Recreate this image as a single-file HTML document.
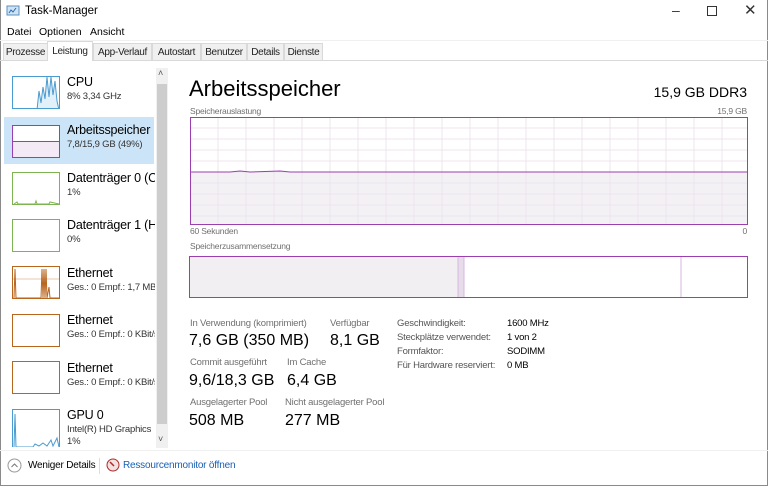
<!DOCTYPE html>
<html><head><meta charset="utf-8"><style>
*{margin:0;padding:0;box-sizing:border-box}
body{width:768px;height:486px;background:#fff;font-family:"Liberation Sans",sans-serif;color:#000;position:relative;overflow:hidden;font-size:12px}
.a{position:absolute;white-space:nowrap}
.win{position:absolute;left:0;top:0;width:768px;height:486px;border:1px solid #8a8a8a;border-top:none}
.tab{position:absolute;top:43px;height:17px;font-size:10px;letter-spacing:-0.3px;padding:3px 0 0;text-align:center;white-space:nowrap;overflow:hidden;background:#f0f0f0;border:1px solid #d9d9d9;border-bottom:none;color:#222}
.th{position:absolute;left:12px;width:48px;height:33px;background:#fff}
.nm{position:absolute;left:67px;font-size:12.5px;width:88px;overflow:hidden;white-space:nowrap;letter-spacing:-0.2px}
.sb{position:absolute;left:67px;font-size:9.5px;color:#333;width:88px;overflow:hidden;white-space:nowrap;letter-spacing:-0.2px}
.lbl{font-size:9.5px;color:#707070;letter-spacing:-0.2px}
.big{font-size:16px;color:#000}
.sm{font-size:9.5px;color:#555;letter-spacing:-0.2px}
.v{font-size:9.5px;letter-spacing:-0.2px}
</style></head><body>
<div class="win"></div>
<svg class="a" style="left:6px;top:5px" width="14" height="12"><rect x="1" y="1" width="12" height="9" fill="#cfe3f3" stroke="#5a8fc0"/><path d="M3 8 L5 5 L7 7 L10 3" stroke="#2a6cb0" fill="none"/></svg>
<div class="a" style="left:25px;top:5px;font-size:11.5px">Task-Manager</div>
<div class="a" style="left:672px;top:2px;font-size:14px;color:#333">–</div>
<div class="a" style="left:707px;top:6px;width:10px;height:10px;border:1px solid #333"></div>
<div class="a" style="left:744px;top:1px;font-size:15px;color:#333">✕</div>
<div class="a" style="left:7px;top:26px;font-size:10.5px">Datei</div>
<div class="a" style="left:39px;top:26px;font-size:10.5px">Optionen</div>
<div class="a" style="left:90px;top:26px;font-size:10.5px">Ansicht</div>
<div class="a" style="left:0;top:40px;width:768px;height:1px;background:#f0f0f0"></div>
<div class="a" style="left:0;top:60px;width:768px;height:1px;background:#d9d9d9"></div>
<div class="tab" style="left:3px;width:45px">Prozesse</div>
<div class="tab" style="left:47px;top:41px;height:20px;width:46px;background:#fff;padding-top:4px">Leistung</div>
<div class="tab" style="left:93px;width:59px">App-Verlauf</div>
<div class="tab" style="left:152px;width:49px">Autostart</div>
<div class="tab" style="left:201px;width:46px">Benutzer</div>
<div class="tab" style="left:247px;width:37px">Details</div>
<div class="tab" style="left:284px;width:39px">Dienste</div>
<div class="a" style="left:4px;top:117px;width:150px;height:47px;background:#cce4f7"></div>
<div class="a" style="left:156px;top:68px;width:12px;height:380px;background:#f0f0f0"></div>
<div class="a" style="left:157px;top:84px;width:10px;height:340px;background:#cdcdcd"></div>
<div class="a" style="left:158px;top:68px;font-size:9px;color:#555">˄</div>
<div class="a" style="left:158px;top:434px;font-size:9px;color:#555">˅</div>

<svg class="th" style="top:76px;border:1px solid #4a9bd0"><path d="M0 33 L24 33 L26 14 L28 26 L30 10 L32 22 L34 0 L36 20 L38 0 L40 18 L42 4 L44 24 L46 33" stroke="#4a9bd0" fill="#e2f0fa"/></svg>
<div class="nm" style="top:75px">CPU</div><div class="sb" style="top:91px">8% 3,34 GHz</div>

<div class="th" style="top:125px;border:1px solid #9b3fb0;background:linear-gradient(#fff 50%,#f4eaf6 50%)"><div style="position:absolute;top:15px;left:0;width:46px;height:1px;background:#9b3fb0"></div></div>
<div class="nm" style="top:123px">Arbeitsspeicher</div><div class="sb" style="top:139px">7,8/15,9 GB (49%)</div>

<svg class="th" style="top:172px;border:1px solid #7db451"><path d="M1 31 L4 29 L5 31 L22 31 L23 28 L24 31 L36 31 L37 29 L46 31" stroke="#7db451" fill="none"/></svg>
<div class="nm" style="top:171px">Datenträger 0 (C:)</div><div class="sb" style="top:187px">1%</div>

<div class="th" style="top:219px;border:1px solid #7db451"></div>
<div class="nm" style="top:218px">Datenträger 1 (H:)</div><div class="sb" style="top:234px">0%</div>

<svg class="th" style="top:266px;border:1px solid #b8651e"><path d="M0 12 L48 12" stroke="#e8c9ae"/><path d="M1 31 L2 2 L3 31 L28 31 L29 2 L30 31 L31 2 L32 31 L33 2 L34 31 L36 20 L37 31 L46 31" stroke="#b8651e" fill="none"/></svg>
<div class="nm" style="top:266px">Ethernet</div><div class="sb" style="top:282px">Ges.: 0 Empf.: 1,7 MBit/s</div>

<div class="th" style="top:314px;border:1px solid #b8651e"></div>
<div class="nm" style="top:313px">Ethernet</div><div class="sb" style="top:329px">Ges.: 0 Empf.: 0 KBit/s</div>

<div class="th" style="top:361px;border:1px solid #b8651e"></div>
<div class="nm" style="top:361px">Ethernet</div><div class="sb" style="top:377px">Ges.: 0 Empf.: 0 KBit/s</div>

<svg class="th" style="top:409px;height:38px;border:1px solid #4a9bd0;border-bottom:none"><path d="M1 37 L2 4 L3 37 L20 37 L22 34 L26 36 L30 33 L34 36 L38 30 L40 36 L44 28 L46 37" stroke="#4a9bd0" fill="none"/></svg>
<div class="nm" style="top:408px">GPU 0</div><div class="sb" style="top:424px">Intel(R) HD Graphics</div><div class="sb" style="top:436px">1%</div>

<div class="a" style="left:189px;top:76px;font-size:22px">Arbeitsspeicher</div>
<div class="a" style="right:21px;top:84px;font-size:14px">15,9 GB DDR3</div>
<div class="a lbl" style="left:190px;top:106px;font-size:8.5px">Speicherauslastung</div>
<div class="a lbl" style="right:21px;top:106px;font-size:8.5px">15,9 GB</div>
<svg class="a" style="left:190px;top:117px" width="558" height="108">
<rect x="0" y="55" width="558" height="53" fill="#f4f1f5"/>
<g stroke="#ece4ee">
<path d="M28 0V108M56 0V108M84 0V108M112 0V108M140 0V108M168 0V108M196 0V108M224 0V108M252 0V108M280 0V108M308 0V108M336 0V108M364 0V108M392 0V108M420 0V108M448 0V108M476 0V108M504 0V108M532 0V108"/>
<path d="M0 11H558M0 22H558M0 33H558M0 44H558M0 55H558M0 66H558M0 77H558M0 88H558M0 99H558"/>
</g>
<path d="M0 55 L40 55 L50 54 L60 55 L90 54 L100 55 L558 55" stroke="#9b3fb0" fill="none"/>
<rect x="0.5" y="0.5" width="557" height="107" fill="none" stroke="#9b3fb0"/>
</svg>
<div class="a lbl" style="left:190px;top:226px;font-size:8.5px">60 Sekunden</div>
<div class="a lbl" style="right:21px;top:226px;font-size:8.5px">0</div>
<div class="a lbl" style="left:190px;top:241px;font-size:8.5px">Speicherzusammensetzung</div>
<svg class="a" style="left:189px;top:256px" width="559" height="42">
<rect x="1" y="1" width="268" height="40" fill="#f1eff2"/>
<rect x="269" y="1" width="6" height="40" fill="#e6dcea"/>
<path d="M269 1V41M275 1V41M492 1V41" stroke="#d6b8de"/>
<rect x="0.5" y="0.5" width="558" height="41" fill="none" stroke="#9b3fb0"/>
</svg>

<div class="a lbl" style="left:190px;top:318px">In Verwendung (komprimiert)</div>
<div class="a lbl" style="left:330px;top:318px">Verfügbar</div>
<div class="a big" style="left:189px;top:332px">7,6 GB (350 MB)</div>
<div class="a big" style="left:330px;top:332px">8,1 GB</div>
<div class="a lbl" style="left:190px;top:357px">Commit ausgeführt</div>
<div class="a lbl" style="left:287px;top:357px">Im Cache</div>
<div class="a big" style="left:189px;top:372px">9,6/18,3 GB</div>
<div class="a big" style="left:287px;top:372px">6,4 GB</div>
<div class="a lbl" style="left:190px;top:397px">Ausgelagerter Pool</div>
<div class="a lbl" style="left:285px;top:397px">Nicht ausgelagerter Pool</div>
<div class="a big" style="left:189px;top:412px">508 MB</div>
<div class="a big" style="left:285px;top:412px">277 MB</div>

<div class="a sm" style="left:397px;top:318px">Geschwindigkeit:</div><div class="a v" style="left:507px;top:318px">1600 MHz</div>
<div class="a sm" style="left:397px;top:332px">Steckplätze verwendet:</div><div class="a v" style="left:507px;top:332px">1 von 2</div>
<div class="a sm" style="left:397px;top:346px">Formfaktor:</div><div class="a v" style="left:507px;top:346px">SODIMM</div>
<div class="a sm" style="left:397px;top:360px">Für Hardware reserviert:</div><div class="a v" style="left:507px;top:360px">0 MB</div>

<div class="a" style="left:0;top:450px;width:768px;height:1px;background:#f0f0f0"></div>
<svg class="a" style="left:7px;top:458px" width="15" height="15"><circle cx="7.5" cy="7.5" r="6.5" fill="none" stroke="#999"/><path d="M4.5 9 L7.5 6 L10.5 9" fill="none" stroke="#777"/></svg>
<div class="a" style="left:28px;top:460px;font-size:10px;letter-spacing:-0.2px">Weniger Details</div>
<div class="a" style="left:99px;top:458px;width:1px;height:16px;background:#ddd"></div>
<svg class="a" style="left:106px;top:458px" width="14" height="14"><circle cx="7" cy="7" r="6" fill="#f3e1e1" stroke="#b02828"/><path d="M4 4 L8 8" stroke="#b02828" stroke-width="1.5"/></svg>
<div class="a" style="left:123px;top:460px;font-size:10px;letter-spacing:-0.2px;color:#1a5fb4">Ressourcenmonitor öffnen</div>
</body></html>
